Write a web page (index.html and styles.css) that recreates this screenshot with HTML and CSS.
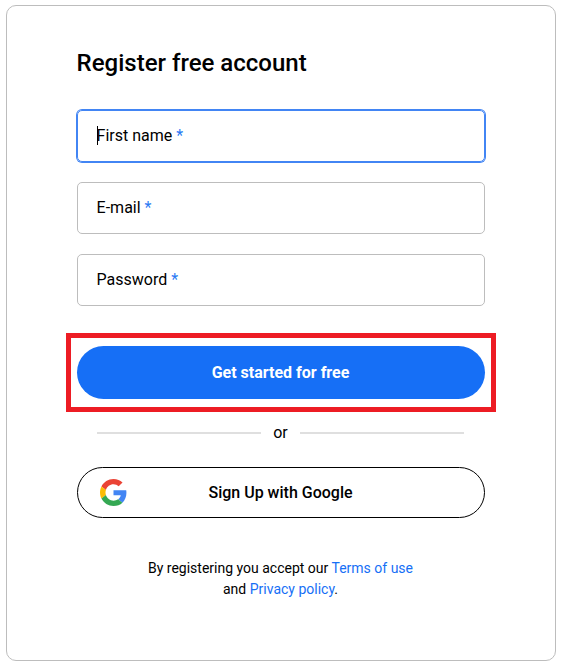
FILE: index.html
```html
<!DOCTYPE html>
<html lang="en">
<head>
<meta charset="utf-8">
<title>Register free account</title>
<link rel="stylesheet" href="styles.css">
</head>
<body>
<main class="card">
  <h1 class="title">Register free account</h1>
  <form class="form">
    <div class="field field-focus"><span class="caret"></span><span>First name <span class="req">*</span></span></div>
    <div class="field"><span>E-mail <span class="req">*</span></span></div>
    <div class="field"><span>Password <span class="req">*</span></span></div>
    <div class="highlight"><button type="button" class="primary">Get started for free</button></div>
    <div class="divider"><span class="line"></span><span class="or">or</span><span class="line"></span></div>
    <button type="button" class="google">
      <svg class="g-icon" viewBox="0 0 48 48" aria-hidden="true">
        <path fill="#EA4335" d="M24 9.5c3.54 0 6.71 1.22 9.21 3.6l6.85-6.85C35.9 2.38 30.47 0 24 0 14.62 0 6.51 5.38 2.56 13.22l7.98 6.19C12.43 13.72 17.74 9.5 24 9.5z"/>
        <path fill="#4285F4" d="M46.98 24.55c0-1.57-.15-3.09-.38-4.55H24v9.02h12.94c-.58 2.96-2.26 5.48-4.78 7.18l7.73 6c4.51-4.18 7.09-10.36 7.09-17.65z"/>
        <path fill="#FBBC05" d="M10.53 28.59c-.48-1.45-.76-2.99-.76-4.59s.27-3.14.76-4.59l-7.98-6.19C.92 16.46 0 20.12 0 24c0 3.88.92 7.54 2.56 10.78l7.97-6.19z"/>
        <path fill="#34A853" d="M24 48c6.48 0 11.93-2.13 15.89-5.81l-7.73-6c-2.15 1.45-4.92 2.3-8.16 2.3-6.26 0-11.57-4.22-13.47-9.91l-7.98 6.19C6.51 42.62 14.62 48 24 48z"/>
      </svg>
      <span>Sign Up with Google</span>
    </button>
  </form>
  <p class="legal">By registering you accept our <a href="#">Terms of use</a><br>and <a href="#">Privacy policy</a>.</p>
</main>
</body>
</html>
```
FILE: styles.css
```css
* { box-sizing: border-box; }
html, body { margin: 0; background: #fff; }
body {
  padding: 5px 8px 7px 6px;
  font-family: Roboto, "Liberation Sans", sans-serif;
  color: #000;
}
.card {
  height: 656px;
  border: 1px solid #bdbdbd;
  border-radius: 10px;
  padding: 41px 70px 0;
}
.title {
  margin: 0 0 0 -0.4px;
  font-size: 24px;
  line-height: 32px;
  font-weight: 500;
}
.form {
  display: flex;
  flex-direction: column;
  margin-top: 31px;
}
.field {
  position: relative;
  display: flex;
  align-items: center;
  height: 52px;
  margin-bottom: 20px;
  padding: 0 18.6px 2px;
  border: 1px solid #bdbdbd;
  border-radius: 5px;
  font-size: 16px;
}
.field-focus {
  border-color: #4285f4;
  box-shadow: 0 0 0 1px #4285f4;
}
.caret {
  position: absolute;
  left: 19px;
  top: 15px;
  width: 1px;
  height: 19px;
  background: #000;
}
.req { color: #2a7af3; }
.highlight {
  position: relative;
  margin-top: 20px;
}
.highlight::after {
  content: "";
  position: absolute;
  inset: -13px -11px;
  border: 5px solid #ed1c24;
  pointer-events: none;
}
.primary {
  display: block;
  width: 100%;
  height: 53px;
  padding: 0 1px 0 0;
  border: 0;
  border-radius: 27px;
  background: #166ff6;
  color: #fff;
  font: 700 16px Roboto, "Liberation Sans", sans-serif;
}
.divider {
  display: flex;
  align-items: center;
  gap: 12.6px;
  height: 20px;
  margin-top: 24px;
  padding: 0 21px 0 20px;
}
.line { flex: 1; height: 2px; background: #dfdfdf; }
.or { font-size: 16px; line-height: 20px; }
.google {
  position: relative;
  display: flex;
  align-items: center;
  justify-content: center;
  height: 51px;
  margin-top: 24px;
  padding: 0 1px 0 0;
  border: 1px solid #000;
  border-radius: 26px;
  background: #fff;
  color: #000;
  font: 500 16px Roboto, "Liberation Sans", sans-serif;
}
.g-icon {
  position: absolute;
  left: 22px;
  top: 11px;
  width: 27px;
  height: 27px;
}
.legal {
  margin: 40px 0 0;
  padding-right: 1px;
  font-size: 14px;
  line-height: 21px;
  text-align: center;
}
.legal a { color: #166ff6; text-decoration: none; }
```
